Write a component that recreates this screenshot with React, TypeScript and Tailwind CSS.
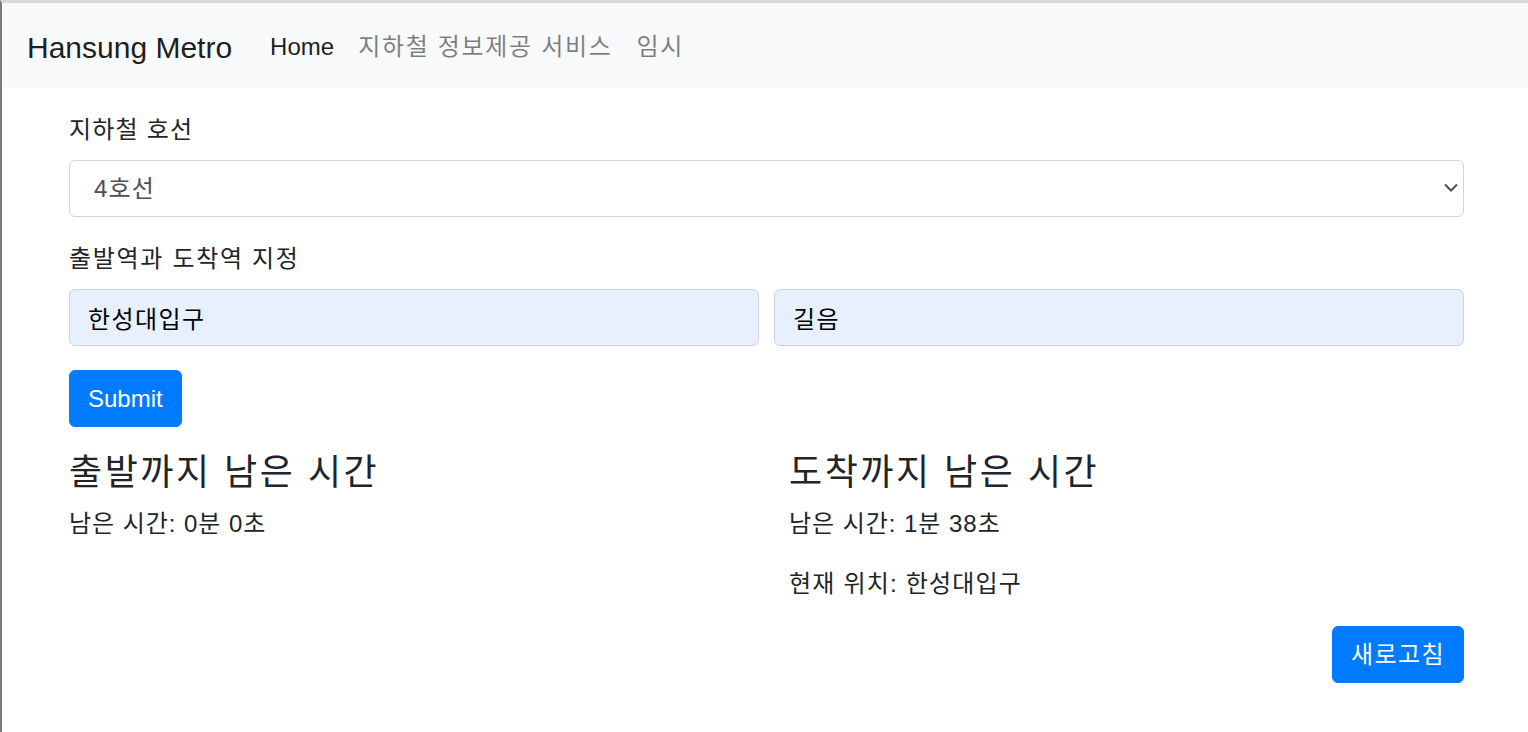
import React, { useState } from 'react';

const navLinks = [
  { label: 'Home', active: true, ko: false },
  { label: '지하철 정보제공 서비스', active: false, ko: true },
  { label: '임시', active: false, ko: true },
];

const App: React.FC = () => {
  const [line, setLine] = useState('4호선');
  const [from, setFrom] = useState('한성대입구');
  const [to, setTo] = useState('길음');

  return (
    <div className="min-h-screen bg-white border-t-[3px] border-t-[#d9d9d9] border-l-2 border-l-[#7c7c7c] text-[#212529] font-['Liberation_Sans','Noto_Sans_CJK_KR',sans-serif] text-[24px] leading-9">
      <nav className="flex items-center bg-[#f8f9fa] pl-[25px] pr-6 pt-[3px] h-[85px]">
        <a className="text-[30px] leading-[45px] mr-[26px] text-black/90">Hansung Metro</a>
        <ul className="flex">
          {navLinks.map((l) => (
            <li
              key={l.label}
              className={`px-3 py-3 ${l.ko ? 'tracking-[0.07em]' : ''} ${l.active ? 'text-black/90' : 'text-black/50'}`}
            >
              {l.label}
            </li>
          ))}
        </ul>
      </nav>

      <div className="w-[1440px] mx-auto pl-6 pr-[21px] pt-6">
        <form onSubmit={(e) => e.preventDefault()}>
          <div className="mb-6">
            <label className="block mb-3 tracking-[0.05em]">지하철 호선</label>
            <div className="relative">
              <select
                value={line}
                onChange={(e) => setLine(e.target.value)}
                className="w-full h-[57px] appearance-none border border-[#ced4da] rounded-md pl-6 pr-12 text-[#495057] bg-white outline-none tracking-[0.05em]"
              >
                <option>1호선</option>
                <option>2호선</option>
                <option>3호선</option>
                <option>4호선</option>
              </select>
              <svg
                className="absolute right-[6px] top-[23px] pointer-events-none"
                width="14"
                height="9"
                viewBox="0 0 14 9"
                fill="none"
              >
                <path d="M1 1.5l6 6 6-6" stroke="#4a4f55" strokeWidth="2" />
              </svg>
            </div>
          </div>

          <div className="mb-6">
            <label className="block mb-3 tracking-[0.07em]">출발역과 도착역 지정</label>
            <div className="flex gap-[15px]">
              <input
                value={from}
                onChange={(e) => setFrom(e.target.value)}
                className="flex-1 h-[57px] border border-[#ced4da] rounded-md px-[18px] bg-[#e8f0fe] text-black outline-none tracking-[0.06em]"
              />
              <input
                value={to}
                onChange={(e) => setTo(e.target.value)}
                className="flex-1 h-[57px] border border-[#ced4da] rounded-md px-[18px] bg-[#e8f0fe] text-black outline-none tracking-[0.06em]"
              />
            </div>
          </div>

          <button
            type="submit"
            className="h-[57px] px-[18px] bg-[#007bff] border border-[#007bff] text-white rounded-md"
          >
            Submit
          </button>
        </form>

        <div className="flex mt-6 -mx-[22.5px]">
          <div className="w-1/2 px-[22.5px]">
            <h4 className="text-[36px] leading-[43px] mb-3 font-normal tracking-[0.07em]">출발까지 남은 시간</h4>
            <p className="mb-6 tracking-[0.04em]">남은 시간: 0분 0초</p>
          </div>
          <div className="w-1/2 px-[22.5px]">
            <h4 className="text-[36px] leading-[43px] mb-3 font-normal tracking-[0.07em]">도착까지 남은 시간</h4>
            <p className="mb-6 tracking-[0.04em]">남은 시간: 1분 38초</p>
            <p className="mb-6 tracking-[0.05em]">현재 위치: 한성대입구</p>
            <div className="flex justify-end">
              <button className="h-[57px] px-[18px] bg-[#007bff] border border-[#007bff] text-white rounded-md tracking-[0.06em]">
                새로고침
              </button>
            </div>
          </div>
        </div>
      </div>
    </div>
  );
};

export default App;
